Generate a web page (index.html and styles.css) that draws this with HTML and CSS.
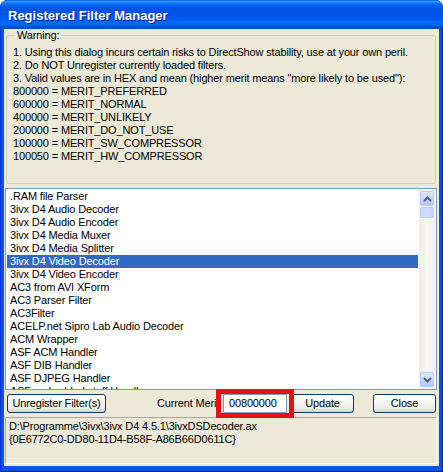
FILE: index.html
```html
<!DOCTYPE html>
<html>
<head>
<meta charset="utf-8">
<title>Registered Filter Manager</title>
<link rel="stylesheet" href="styles.css">
</head>
<body>
<div class="window">
  <div class="titlebar"><span class="title">Registered Filter Manager</span></div>
  <div class="client">
    <fieldset class="group">
      <legend class="legend">Warning:</legend>
      <div class="line">1. Using this dialog incurs certain risks to DirectShow stability, use at your own peril.</div>
      <div class="line">2. Do NOT Unregister currently loaded filters.</div>
      <div class="line">3. Valid values are in HEX and mean (higher merit means "more likely to be used"):</div>
      <div class="line">800000 = MERIT_PREFERRED</div>
      <div class="line">600000 = MERIT_NORMAL</div>
      <div class="line">400000 = MERIT_UNLIKELY</div>
      <div class="line">200000 = MERIT_DO_NOT_USE</div>
      <div class="line">100000 = MERIT_SW_COMPRESSOR</div>
      <div class="line">100050 = MERIT_HW_COMPRESSOR</div>
    </fieldset>
    <div class="listbox">
      <div class="items">
        <div class="item">.RAM file Parser</div>
        <div class="item">3ivx D4 Audio Decoder</div>
        <div class="item">3ivx D4 Audio Encoder</div>
        <div class="item">3ivx D4 Media Muxer</div>
        <div class="item">3ivx D4 Media Splitter</div>
        <div class="item selected">3ivx D4 Video Decoder</div>
        <div class="item">3ivx D4 Video Encoder</div>
        <div class="item">AC3 from AVI XForm</div>
        <div class="item">AC3 Parser Filter</div>
        <div class="item">AC3Filter</div>
        <div class="item">ACELP.net Sipro Lab Audio Decoder</div>
        <div class="item">ACM Wrapper</div>
        <div class="item">ASF ACM Handler</div>
        <div class="item">ASF DIB Handler</div>
        <div class="item">ASF DJPEG Handler</div>
        <div class="item">ASF embedded stuff Handler</div>
      </div>
      <div class="scrollbar">
        <div class="sbtn"><svg width="9" height="6" viewBox="0 0 9 6"><path d="M1 5 L4.5 1.5 L8 5" fill="none" stroke="#4D6185" stroke-width="2"/></svg></div>
        <div class="thumb"></div>
        <div class="track"></div>
        <div class="sbtn"><svg width="9" height="6" viewBox="0 0 9 6"><path d="M1 1 L4.5 4.5 L8 1" fill="none" stroke="#4D6185" stroke-width="2"/></svg></div>
      </div>
    </div>
    <div class="buttonrow">
      <button class="btn btn-unreg">Unregister Filter(s)</button>
      <span class="label">Current Merit</span>
      <span class="editwrap">
        <span class="edit">00800000</span>
        <span class="redframe"></span>
      </span>
      <button class="btn btn-update">Update</button>
      <button class="btn btn-close">Close</button>
    </div>
    <div class="info">
      <div class="line">D:\Programme\3ivx\3ivx D4 4.5.1\3ivxDSDecoder.ax</div>
      <div class="line">{0E6772C0-DD80-11D4-B58F-A86B66D0611C}</div>
    </div>
  </div>
</div>
</body>
</html>
```

FILE: styles.css
```css
html, body {
  margin: 0;
  padding: 0;
  background: #ffffff;
}
body {
  font-family: "Liberation Sans", Arial, sans-serif;
  font-size: 11px;
  letter-spacing: -0.15px;
  color: #000;
}
.window {
  width: 443px;
  height: 472px;
  box-sizing: border-box;
  display: flex;
  flex-direction: column;
  background: #0855DD;
  border-radius: 8px 8px 0 0;
  overflow: hidden;
  box-shadow: inset 1px 0 0 #0831D9, inset -1px 0 0 #001EA0, inset 0 -1px 0 #001EA0;
}
.titlebar {
  height: 29px;
  flex: none;
  display: flex;
  align-items: center;
  padding-left: 8px;
  background: linear-gradient(to bottom, #0058EE 0%, #3593FF 4%, #288EFF 7%, #127DFF 10%, #036FFC 14%, #0262EE 20%, #0057E5 28%, #0054E3 36%, #0055EB 56%, #005BF5 66%, #026AFE 76%, #0062EF 86%, #0052D6 92%, #0048C8 100%);
}
.title {
  color: #fff;
  font-family: "Liberation Sans", Arial, sans-serif;
  font-weight: bold;
  font-size: 13px;
  letter-spacing: 0;
  text-shadow: 1px 1px 0 #0A1883;
  padding-top: 1px;
}
.client {
  flex: 1;
  margin: 0 4px 6px 4px;
  background: #ECE9D8;
  display: flex;
  flex-direction: column;
}
.group {
  margin: 0 3px 0 2px;
  padding: 4px 6px 20px 6px;
  border: 1px solid #D0D0BF;
  border-radius: 3px;
  min-width: 0;
}
.legend {
  padding: 0 2px;
  margin-left: 2px;
  line-height: 13px;
  height: 13px;
}
.line {
  line-height: 13px;
  height: 13px;
  white-space: nowrap;
}
.listbox {
  margin: 4px 2px 0 1px;
  height: 202px;
  box-sizing: border-box;
  border: 1px solid #7F9DB9;
  background: #fff;
  display: flex;
  overflow: hidden;
}
.items {
  flex: 1;
  padding: 1px 1px 0 1px;
  overflow: hidden;
}
.item {
  height: 13px;
  line-height: 13px;
  padding-left: 3px;
  white-space: nowrap;
}
.item.selected {
  background: #316AC5;
  color: #fff;
}
.scrollbar {
  width: 17px;
  flex: none;
  display: flex;
  flex-direction: column;
  background: linear-gradient(to right, #EEEDE5, #F7F7F3 40%, #F3F1EA);
  padding: 1px 0;
  box-sizing: border-box;
}
.sbtn {
  height: 15px;
  margin: 1px 2px 1px 1px;
  box-sizing: border-box;
  border: 1px solid #B9CBF3;
  border-radius: 2px;
  background: linear-gradient(to bottom, #DCE6FC, #C2D4FB 60%, #B7CAF6);
  display: flex;
  align-items: center;
  justify-content: center;
}
.thumb {
  height: 11px;
  margin: 0 2px 0 1px;
  box-sizing: border-box;
  border: 1px solid #B9CBF3;
  border-radius: 2px;
  background: linear-gradient(to right, #C9D8FC, #D4E0FD 50%, #C4D4FB);
}
.track {
  flex: 1;
}
.buttonrow {
  height: 27px;
  flex: none;
  display: flex;
  align-items: center;
}
.btn {
  height: 19px;
  box-sizing: border-box;
  border: 1px solid #003C74;
  border-radius: 3px;
  background: linear-gradient(to bottom, #FFFFFF 0%, #F7F7F4 40%, #ECEBE6 80%, #D6D0C5 100%);
  font-family: "Liberation Sans", Arial, sans-serif;
  font-size: 11px;
  letter-spacing: -0.15px;
  color: #000;
  padding: 0;
  margin: 0;
  line-height: 17px;
}
.btn-unreg {
  width: 99px;
  margin-left: 3px;
}
.label {
  width: 63px;
  margin-left: 51px;
  padding-right: 2px;
  box-sizing: border-box;
  text-align: right;
  white-space: nowrap;
  line-height: 13px;
}
.editwrap {
  position: relative;
  margin-left: 3px;
  display: block;
  width: 64px;
  height: 19px;
  margin-top: -1px;
}
.edit {
  display: block;
  width: 64px;
  height: 19px;
  box-sizing: border-box;
  border: 1px solid #7F9DB9;
  background: #fff;
  padding-left: 5px;
  line-height: 16px;
}
.redframe {
  position: absolute;
  left: -7px;
  right: -7px;
  top: -5px;
  bottom: -5px;
  border: 5px solid #E4101A;
}
.btn-update {
  width: 63px;
  margin-left: 4px;
}
.btn-close {
  width: 63px;
  margin-left: 19px;
}
.info {
  height: 47px;
  box-sizing: border-box;
  margin: 0 2px 2px 1px;
  padding: 2px 3px;
  border-top: 1px solid #ACA899;
  border-left: 1px solid #ACA899;
  border-right: 1px solid #FFFFFF;
  border-bottom: 1px solid #FFFFFF;
  background: #ECE9D8;
}
```
